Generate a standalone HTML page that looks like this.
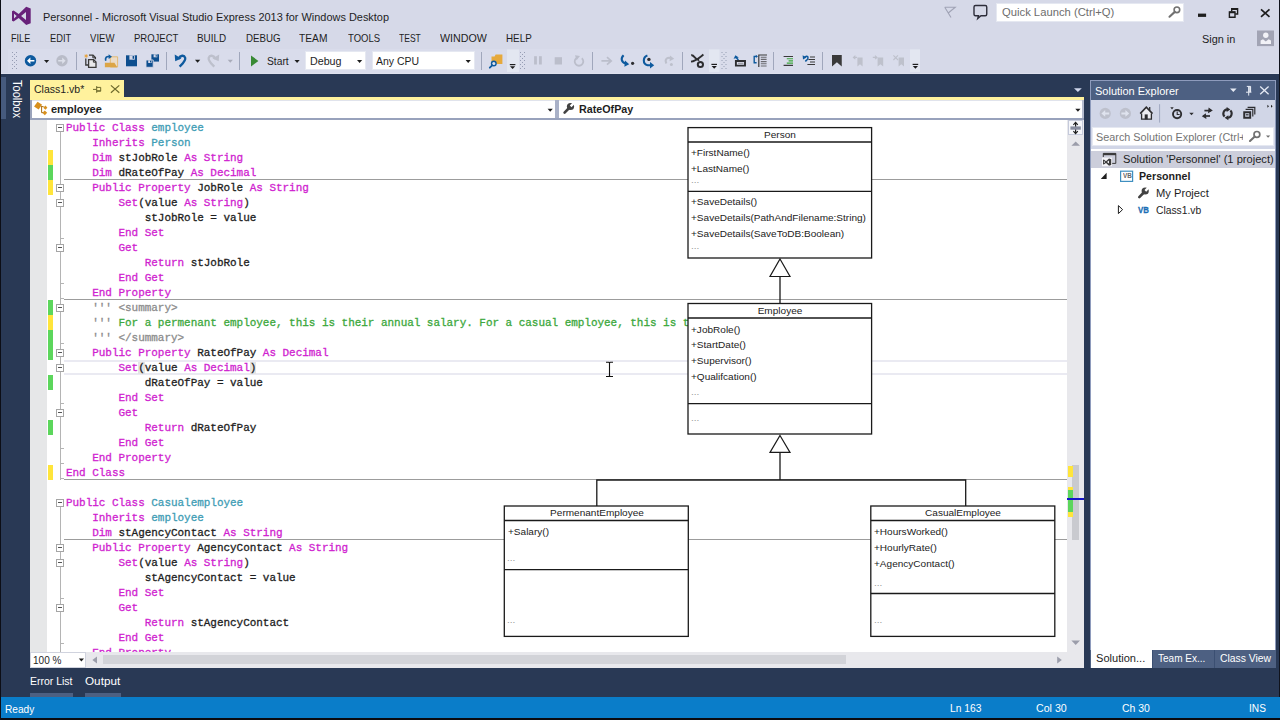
<!DOCTYPE html>
<html><head><meta charset="utf-8"><title>Personnel - Microsoft Visual Studio Express 2013 for Windows Desktop</title>
<style>
*{box-sizing:border-box;margin:0;padding:0}
html,body{width:1280px;height:720px;overflow:hidden}
body{background:#D6D9E8;font-family:"Liberation Sans",sans-serif;font-size:12px;color:#1e1e1e;position:relative}
.abs{position:absolute}
.t{position:absolute;white-space:nowrap;line-height:16px;height:16px;transform-origin:0 50%}
.u{position:absolute;white-space:nowrap;line-height:12px;height:12px;font-size:9.1px;color:#222;transform:scaleX(1.104);transform-origin:0 50%}
.code{position:absolute;left:66px;-webkit-text-stroke:0.3px;letter-spacing:-0.04px;font-family:"Liberation Mono",monospace;font-size:11px;line-height:15px;height:15px;white-space:pre;color:#1e1e1e}
.k{color:#D01FD0}.ty{color:#3F9DB5}.c{color:#3DA83D}.x{color:#8c8c8c}.br{background:#E4E4E4}
.sep{position:absolute;width:1.3px;background:#A0A7BC}
.combo{position:absolute;background:#fff;border:1px solid #E5E8F1}
.box{position:absolute;width:8.6px;height:8.6px;border:1px solid #A5A5A5;background:#fff}
.box:after{content:"";position:absolute;left:1px;top:2.8px;width:4.6px;height:1px;background:#555}
</style></head><body>

<div class="abs" id="navy" style="left:0;top:74px;width:1280px;height:624px;background:#293955"></div>
<div class="abs" style="left:1279px;top:0;width:1px;height:720px;background:#10131c"></div>
<div class="abs" style="left:0;top:0;width:1px;height:720px;background:#0c0e16;z-index:5"></div>
<div class="abs" style="left:1px;top:77px;width:5px;height:42px;background:#465A7D"></div>
<div class="abs" style="left:17px;top:99px;width:0;height:0"><div style="position:absolute;white-space:nowrap;font-size:12px;color:#fff;line-height:14px;transform:translate(-50%,-50%) rotate(90deg) scaleX(.92);">Toolbox</div></div>
<div class="abs" style="left:8px;top:48.5px;width:912px;height:24px;background:#D9DCEB"></div>
<div class="abs" style="left:1px;top:72.8px;width:1278px;height:1.2px;background:#DEE1EE"></div>
<div class="abs" style="left:996px;top:3px;width:188px;height:19px;background:#fff;border:1px solid #E5E8F1"></div>
<div class="combo" style="left:305px;top:51px;width:61px;height:19px"></div>
<div class="combo" style="left:372px;top:51px;width:103px;height:19px"></div>
<div class="sep" style="left:76px;top:52px;height:18px"></div>
<div class="sep" style="left:166px;top:52px;height:18px"></div>
<div class="sep" style="left:239px;top:52px;height:18px"></div>
<div class="sep" style="left:481px;top:52px;height:18px"></div>
<div class="sep" style="left:592px;top:52px;height:18px"></div>
<div class="sep" style="left:682px;top:52px;height:18px"></div>
<div class="sep" style="left:773px;top:52px;height:18px"></div>
<div class="sep" style="left:822px;top:52px;height:18px"></div>
<div class="abs" style="left:30px;top:80px;width:94px;height:18px;background:#FFF29D"></div>
<div class="abs" style="left:30px;top:97px;width:1054px;height:3px;background:#FFF29D"></div>
<div class="abs" id="editor" style="left:30px;top:100px;width:1054px;height:568px;background:#fff"></div>
<div class="abs" style="left:30px;top:100px;width:1054px;height:18px;background:#fff;border-top:1px solid #E0E3EC"></div>
<div class="abs" style="left:30px;top:117.5px;width:1054px;height:2px;background:#98A2BC"></div>
<div class="abs" style="left:555px;top:100px;width:4px;height:18px;background:#A9B1C7"></div>
<div class="abs" style="left:30px;top:100px;width:1.5px;height:18px;background:#9AA3BB"></div>
<div class="abs" style="left:1082.3px;top:100px;width:1.7px;height:18px;background:#B5BCCF"></div>
<div class="abs" style="left:30px;top:119.5px;width:17px;height:532.5px;background:#E6E7E8"></div>
<div class="abs" style="left:1067px;top:119.5px;width:17px;height:532.5px;background:#E8E8EC"></div>
<div class="abs" style="left:1068px;top:120px;width:15px;height:15px;background:#F5F6FA;border:1px solid #C5CADB"></div>
<div class="abs" style="left:1072px;top:465px;width:7px;height:75px;background:#C9CACF"></div>
<div class="abs" style="left:1067.5px;top:466px;width:5px;height:11px;background:#FFE53B"></div>
<div class="abs" style="left:1067.5px;top:487px;width:5px;height:30px;background:#FFE53B"></div>
<div class="abs" style="left:1067.5px;top:490px;width:5px;height:22px;background:#5CD65C"></div>
<div class="abs" style="left:1067px;top:498px;width:17px;height:2px;background:#1414C8"></div>
<div class="abs" style="left:30px;top:652px;width:1054px;height:16px;background:#E8E8EC"></div>
<div class="abs" style="left:30px;top:652px;width:56px;height:16px;background:#fff;border:1px solid #D0D3DE"></div>
<div class="abs" style="left:103px;top:655px;width:743px;height:9px;background:#D2D3D8"></div>
<div class="abs" style="left:64px;top:360px;width:1003px;height:15px;border-top:2px solid #EAEAF2;border-bottom:2px solid #EAEAF2"></div>
<div class="abs" style="left:64px;top:179px;width:1003px;height:1px;background:#9C9C9C"></div>
<div class="abs" style="left:64px;top:299px;width:1003px;height:1px;background:#9C9C9C"></div>
<div class="abs" style="left:64px;top:479px;width:1003px;height:1px;background:#9C9C9C"></div>
<div class="abs" style="left:64px;top:539px;width:1003px;height:1px;background:#9C9C9C"></div>
<div class="abs" style="left:60px;top:128px;width:1px;height:352px;background:#B4B4B4"></div>
<div class="abs" style="left:60px;top:503px;width:1px;height:149px;background:#B4B4B4"></div>
<div class="abs" style="left:60px;top:238px;width:4px;height:1px;background:#B4B4B4"></div>
<div class="abs" style="left:60px;top:283px;width:4px;height:1px;background:#B4B4B4"></div>
<div class="abs" style="left:60px;top:298px;width:4px;height:1px;background:#B4B4B4"></div>
<div class="abs" style="left:60px;top:343px;width:4px;height:1px;background:#B4B4B4"></div>
<div class="abs" style="left:60px;top:403px;width:4px;height:1px;background:#B4B4B4"></div>
<div class="abs" style="left:60px;top:448px;width:4px;height:1px;background:#B4B4B4"></div>
<div class="abs" style="left:60px;top:463px;width:4px;height:1px;background:#B4B4B4"></div>
<div class="abs" style="left:60px;top:478px;width:4px;height:1px;background:#B4B4B4"></div>
<div class="abs" style="left:60px;top:598px;width:4px;height:1px;background:#B4B4B4"></div>
<div class="abs" style="left:60px;top:643px;width:4px;height:1px;background:#B4B4B4"></div>
<div class="box" style="left:55.7px;top:123.7px"></div>
<div class="box" style="left:55.7px;top:183.7px"></div>
<div class="box" style="left:55.7px;top:198.7px"></div>
<div class="box" style="left:55.7px;top:243.7px"></div>
<div class="box" style="left:55.7px;top:303.7px"></div>
<div class="box" style="left:55.7px;top:348.7px"></div>
<div class="box" style="left:55.7px;top:363.7px"></div>
<div class="box" style="left:55.7px;top:408.7px"></div>
<div class="box" style="left:55.7px;top:498.7px"></div>
<div class="box" style="left:55.7px;top:543.7px"></div>
<div class="box" style="left:55.7px;top:558.7px"></div>
<div class="box" style="left:55.7px;top:603.7px"></div>
<div class="abs" style="left:48px;top:150px;width:5px;height:15px;background:#FFE53B"></div>
<div class="abs" style="left:48px;top:165px;width:5px;height:15px;background:#5CD65C"></div>
<div class="abs" style="left:48px;top:180px;width:5px;height:15px;background:#FFE53B"></div>
<div class="abs" style="left:48px;top:300px;width:5px;height:15px;background:#5CD65C"></div>
<div class="abs" style="left:48px;top:315px;width:5px;height:15px;background:#FFE53B"></div>
<div class="abs" style="left:48px;top:330px;width:5px;height:15px;background:#5CD65C"></div>
<div class="abs" style="left:48px;top:345px;width:5px;height:15px;background:#5CD65C"></div>
<div class="abs" style="left:48px;top:375px;width:5px;height:15px;background:#5CD65C"></div>
<div class="abs" style="left:48px;top:420px;width:5px;height:15px;background:#5CD65C"></div>
<div class="abs" style="left:48px;top:465px;width:5px;height:15px;background:#FFE53B"></div>
<div class="abs" id="codeclip" style="left:30px;top:119.5px;width:1037px;height:532.5px;overflow:hidden">
<div class="code" style="left:36px;top:1.5px"><span class="k">Public Class</span> <span class="ty">employee</span></div>
<div class="code" style="left:62.25px;top:16.5px"><span class="k">Inherits</span> <span class="ty">Person</span></div>
<div class="code" style="left:62.25px;top:31.5px"><span class="k">Dim</span> stJobRole <span class="k">As String</span></div>
<div class="code" style="left:62.25px;top:46.5px"><span class="k">Dim</span> dRateOfPay <span class="k">As Decimal</span></div>
<div class="code" style="left:62.25px;top:61.5px"><span class="k">Public Property</span> JobRole <span class="k">As String</span></div>
<div class="code" style="left:88.5px;top:76.5px"><span class="k">Set</span>(value <span class="k">As String</span>)</div>
<div class="code" style="left:114.75px;top:91.5px">stJobRole = value</div>
<div class="code" style="left:88.5px;top:106.5px"><span class="k">End Set</span></div>
<div class="code" style="left:88.5px;top:121.5px"><span class="k">Get</span></div>
<div class="code" style="left:114.75px;top:136.5px"><span class="k">Return</span> stJobRole</div>
<div class="code" style="left:88.5px;top:151.5px"><span class="k">End Get</span></div>
<div class="code" style="left:62.25px;top:166.5px"><span class="k">End Property</span></div>
<div class="code" style="left:62.25px;top:181.5px"><span class="x">&#x27;&#x27;&#x27; &lt;summary&gt;</span></div>
<div class="code" style="left:62.25px;top:196.5px"><span class="x">&#x27;&#x27;&#x27; </span><span class="c">For a permenant employee, this is their annual salary. For a casual employee, this is their hourly rate.</span></div>
<div class="code" style="left:62.25px;top:211.5px"><span class="x">&#x27;&#x27;&#x27; &lt;/summary&gt;</span></div>
<div class="code" style="left:62.25px;top:226.5px"><span class="k">Public Property</span> RateOfPay <span class="k">As Decimal</span></div>
<div class="code" style="left:88.5px;top:241.5px"><span class="k">Set</span><span class="br">(</span>value <span class="k">As Decimal</span><span class="br">)</span></div>
<div class="code" style="left:114.75px;top:256.5px">dRateOfPay = value</div>
<div class="code" style="left:88.5px;top:271.5px"><span class="k">End Set</span></div>
<div class="code" style="left:88.5px;top:286.5px"><span class="k">Get</span></div>
<div class="code" style="left:114.75px;top:301.5px"><span class="k">Return</span> dRateOfPay</div>
<div class="code" style="left:88.5px;top:316.5px"><span class="k">End Get</span></div>
<div class="code" style="left:62.25px;top:331.5px"><span class="k">End Property</span></div>
<div class="code" style="left:36px;top:346.5px"><span class="k">End Class</span></div>
<div class="code" style="left:36px;top:376.5px"><span class="k">Public Class</span> <span class="ty">Casualemployee</span></div>
<div class="code" style="left:62.25px;top:391.5px"><span class="k">Inherits</span> <span class="ty">employee</span></div>
<div class="code" style="left:62.25px;top:406.5px"><span class="k">Dim</span> stAgencyContact <span class="k">As String</span></div>
<div class="code" style="left:62.25px;top:421.5px"><span class="k">Public Property</span> AgencyContact <span class="k">As String</span></div>
<div class="code" style="left:88.5px;top:436.5px"><span class="k">Set</span>(value <span class="k">As String</span>)</div>
<div class="code" style="left:114.75px;top:451.5px">stAgencyContact = value</div>
<div class="code" style="left:88.5px;top:466.5px"><span class="k">End Set</span></div>
<div class="code" style="left:88.5px;top:481.5px"><span class="k">Get</span></div>
<div class="code" style="left:114.75px;top:496.5px"><span class="k">Return</span> stAgencyContact</div>
<div class="code" style="left:88.5px;top:511.5px"><span class="k">End Get</span></div>
<div class="code" style="left:62.25px;top:526.5px"><span class="k">End Property</span></div>
</div>
<div class="abs" style="left:1090px;top:80px;width:186px;height:588px;background:#8E9BBC"></div>
<div class="abs" style="left:1091px;top:81px;width:184px;height:19px;background:#4D6082"></div>
<div class="abs" style="left:1091px;top:100px;width:184px;height:49px;background:#D1D6E7"></div>
<div class="abs" style="left:1092px;top:127px;width:182px;height:19px;background:#fff;border:1px solid #E5E8F1"></div>
<div class="abs" style="left:1091px;top:149px;width:184px;height:501px;background:#fff"></div>
<div class="abs" style="left:1091px;top:150.5px;width:184px;height:17px;background:#CCCEDB"></div>
<div class="abs" style="left:1090px;top:650px;width:186px;height:18px;background:#4D6082"></div>
<div class="abs" style="left:1091px;top:650px;width:60.5px;height:18px;background:#fff"></div>
<div class="abs" style="left:1151.5px;top:650px;width:1px;height:18px;background:#3B4F72"></div>
<div class="abs" style="left:1214px;top:650px;width:1px;height:18px;background:#3B4F72"></div>
<div class="abs" style="left:1096px;top:127px;width:147px;height:19px;overflow:hidden"><div class="t" style="left:0;top:1.95px;font-size:11.7px;color:#747474;transform:scaleX(.927)">Search Solution Explorer (Ctrl+;)</div></div>
<div class="abs" style="left:30px;top:692.5px;width:43px;height:6px;background:#4D6082"></div>
<div class="abs" style="left:84.5px;top:692.5px;width:36px;height:6px;background:#4D6082"></div>
<div class="abs" id="status" style="left:0;top:697.2px;width:1280px;height:20.5px;background:#0A7DC9"></div>
<div class="abs" style="left:0;top:717.5px;width:1280px;height:3px;background:#0b0b10"></div>
<svg class="abs" style="left:0;top:0" width="1280" height="720" viewBox="0 0 1280 720">
<defs>
<g id="wr"><path d="M1.1 9.8L5.6 5.2" stroke="#424242" stroke-width="2.6" stroke-linecap="round" fill="none"/><circle cx="7" cy="3.7" r="3.6" fill="#424242"/></g>
<path id="dd" d="M0 0H5.2L2.6 3Z"/>
<g id="ovf"><rect x="0" y="0" width="5.6" height="1.2"/><path d="M0.2 2.2H5.4L2.8 5Z"/></g>
<g id="grip" fill="#969DB4"><path d="M0 0h1v1h-1zM4 0h1v1h-1zM2 2h1v1h-1zM0 4h1v1h-1zM4 4h1v1h-1zM2 6h1v1h-1zM0 8h1v1h-1zM4 8h1v1h-1zM2 10h1v1h-1zM0 12h1v1h-1zM4 12h1v1h-1zM2 14h1v1h-1zM0 16h1v1h-1zM4 16h1v1h-1z"/></g>
</defs>
<!-- VS logo -->
<path fill="#68217A" fill-rule="evenodd" d="M26.2 6.7L30.7 8.5V23.2L26.2 24.9L18.7 18L13.6 21.6L12 20.8V11.2L13.6 10.4L18.7 14ZM26 12L21.1 16L26 20ZM14 13.8L16.7 16L14 18.4Z"/>
<!-- title right -->
<path d="M944.75 7.25H955.25L948.25 13M944.75 7.25L951 17.5" stroke="#A0A3B5" fill="none" stroke-width="1.1"/>
<path d="M975.5 5.5H985.25Q986.75 5.5 986.75 7V14.25Q986.75 15.75 985.25 15.75H981L977.75 18.5L978.5 15.75H975.5Q974 15.75 974 14.25V7Q974 5.5 975.5 5.5Z" stroke="#2d2d3a" stroke-width="1.4" fill="none"/>
<circle cx="1176.9" cy="9.8" r="2.8" stroke="#717171" stroke-width="1.6" fill="none"/><path d="M1174.8 11.9L1169.5 16.7" stroke="#717171" stroke-width="2.1" stroke-linecap="round"/>
<rect x="1198" y="13.6" width="8.1" height="3.3" fill="#1e1e1e"/>
<g stroke="#1e1e1e" stroke-width="1.4" fill="none"><path d="M1231.7 11.5V8.8H1237.6V14H1235.2"/><path d="M1229.4 11.9H1235V17.2H1229.4Z"/><path d="M1229.4 12.3H1235M1231.7 9.2H1237.6" stroke-width="1.8"/></g>
<path d="M1261 9.4L1269.5 16.9M1269.5 9.4L1261 16.9" stroke="#1e1e1e" stroke-width="1.7"/>
<rect x="1257" y="30.5" width="17" height="15.6" fill="#A2A4B4"/><circle cx="1265.8" cy="35.3" r="2.7" fill="#F2F2F7"/><path d="M1260.6 44V40.4L1263 39.3L1265.8 41.5L1268.6 39.3L1271 40.4V44Z" fill="#F2F2F7"/>
<!-- toolbar 1 -->
<use href="#grip" x="12" y="52"/>
<circle cx="30.5" cy="60.8" r="5.7" fill="#0E5A9E"/><path d="M27 60.8L30.4 57.6V60H34.4V61.6H30.4V64Z" fill="#fff"/>
<use href="#dd" x="44" y="60" fill="#1e1e1e"/>
<circle cx="62" cy="60.8" r="5.7" fill="#B9BCC8"/><path d="M65.6 60.8L62.2 57.6V60H58.2V61.6H62.2V64Z" fill="#DDE0EA"/>
<!-- new project -->
<g stroke="#3a3a3a" stroke-width="1.3" fill="none"><path d="M85.8 58.5V65H88M89 55.2H93L95.4 57.6V59.2"/><path d="M92.8 55.2V57.8H95.4" stroke-width="1"/><path d="M88.6 59.6H93.6L96 62V67.4H88.6Z" fill="#E9E9EC"/><path d="M93.4 59.8V62.2H96" stroke-width="1"/></g>
<path d="M86.2 54.2V57.8M84.4 56H88M85 54.8L87.4 57.2M87.4 54.8L85 57.2" stroke="#E6A23A" stroke-width="0.9"/>
<!-- open -->
<path d="M110.3 56.8H117.6V67H110.3Z" fill="#EBDCC8" stroke="#E2B25C" stroke-width="0.8"/>
<path d="M104.9 62.8H114.4L117.2 67.3H104.9Z" fill="#DCA546"/>
<path d="M105.8 60.8C104.8 58 106.6 56 109.4 56.6" stroke="#0E5A9E" stroke-width="1.7" fill="none"/><path d="M108.6 54.2L112 56.8L108.6 59Z" fill="#0E5A9E"/>
<!-- save -->
<path d="M126 55.3H137V66.3H126Z" fill="#0E4F8F"/><rect x="129.4" y="55.3" width="5.4" height="4.4" fill="#D6D9E8"/><rect x="132.6" y="56" width="1.4" height="2.8" fill="#0E4F8F"/>
<!-- save all -->
<path d="M151.4 54.3H159V61.6H151.4Z" fill="#0E4F8F"/><rect x="153.6" y="54.3" width="3.7" height="3" fill="#D6D9E8"/><rect x="155.7" y="54.8" width="1" height="1.9" fill="#0E4F8F"/>
<path d="M146 60H153.2V67.3H146Z" fill="#0E4F8F" stroke="#D6D9E8" stroke-width="0.9"/><rect x="148.2" y="60.3" width="3.4" height="2.7" fill="#D6D9E8"/><rect x="150" y="60.7" width="1" height="1.8" fill="#0E4F8F"/>
<!-- undo / redo -->
<g id="undo"><path d="M178.3 58.8C180.5 55 184.2 54.8 185.2 57.8C186 60.8 183 63.2 179.6 66.6" stroke="#0E5A9E" stroke-width="2.3" fill="none"/><path d="M174.7 54.4L175.2 61.2L181.4 58.6Z" fill="#0E5A9E"/></g>
<use href="#dd" x="195" y="59.8" fill="#1e1e1e"/>
<g transform="translate(393.9,0) scale(-1,1)"><path d="M178.3 58.8C180.5 55 184.2 54.8 185.2 57.8C186 60.8 183 63.2 179.6 66.6" stroke="#BDC0CC" stroke-width="2.3" fill="none"/><path d="M174.7 54.4L175.2 61.2L181.4 58.6Z" fill="#BDC0CC"/></g>
<use href="#dd" x="227.7" y="59.8" fill="#A9ACBA"/>
<!-- start -->
<path d="M251 55.4L258.4 60.9L251 66.4Z" fill="#388A34"/>
<use href="#dd" x="294.5" y="60.1" fill="#1e1e1e"/>
<use href="#dd" x="357" y="60.1" fill="#1e1e1e"/>
<use href="#dd" x="465.6" y="60.1" fill="#1e1e1e"/>
<!-- find in files -->
<path d="M491.5 56.4H494.6L495.6 54.6H502.4V63.9H491.5Z" fill="#E6A93C"/>
<circle cx="493.8" cy="63.5" r="2.3" fill="#DCE3F0" stroke="#0E5A9E" stroke-width="1.4"/><path d="M492.2 65.3L489.8 67.7" stroke="#0E5A9E" stroke-width="1.8" stroke-linecap="round"/>
<rect x="507" y="49.5" width="12" height="22.5" fill="#E3E7F1"/><use href="#ovf" x="509.8" y="64" fill="#1e1e1e"/>
<use href="#grip" x="520" y="52"/>
<g fill="#BBBECB"><rect x="534.1" y="56.2" width="2.8" height="8.3"/><rect x="539" y="56.2" width="2.8" height="8.3"/><rect x="554.7" y="57.2" width="7.3" height="7.3"/></g>
<path d="M576.2 58.2A4.3 4.3 0 1 0 581.8 58.2" stroke="#BBBECB" stroke-width="1.8" fill="none"/><path d="M575 55.2L580 56L576.6 60.2Z" fill="#BBBECB"/>
<path d="M601.4 60.9H610.4M607 57.2L611.2 60.9L607 64.6" stroke="#BBBECB" stroke-width="1.7" fill="none"/>
<!-- step icons -->
<path d="M623.6 55.2C620.6 58 621 62.6 626 63.6" stroke="#0E5A9E" stroke-width="2.1" fill="none"/><path d="M625 60.4L629.2 64.2L624.4 66.8Z" fill="#0E5A9E"/><circle cx="632.6" cy="63.3" r="1.6" fill="#2d2d30"/>
<path d="M647.4 55.4C642.6 57 642.6 64.2 647.6 65.2H651" stroke="#0E5A9E" stroke-width="2.1" fill="none"/><path d="M650 62L654.2 65.2L650 68.4Z" fill="#0E5A9E"/><circle cx="648.9" cy="59.4" r="1.7" fill="#2d2d30"/>
<path d="M666.4 63.4C664 59 668 56.6 671.4 58.4" stroke="#BDC0CC" stroke-width="2" fill="none"/><path d="M670 55.4L674.2 58.8L669.6 61.2Z" fill="#BDC0CC"/><circle cx="671.4" cy="64.6" r="1.5" fill="#BDC0CC"/>
<!-- breakpoints icon -->
<g stroke="#2d2d30" fill="none"><path d="M691.2 55.4C694.2 54.4 695.4 60.8 699.2 60" stroke-width="1.9"/><path d="M691 61.6C695.6 61.4 699 58 703.4 54.6" stroke-width="1.9"/><circle cx="700.4" cy="64.5" r="2.6" stroke-width="2"/></g>
<rect x="709" y="49.5" width="10.5" height="22.5" fill="#E3E7F1"/><use href="#ovf" x="711.4" y="63.8" fill="#1e1e1e"/>
<use href="#grip" x="721.5" y="52"/>
<!-- text editor icons -->
<path d="M733.6 58.8L735.4 55.2L738.8 57.6Z" fill="#0E5A9E"/><path d="M736 57.2L738.4 60" stroke="#0E5A9E" stroke-width="1.5"/>
<path d="M735.9 61H745V65.6H735.9Z" stroke="#2d2d30" stroke-width="1.9" fill="none"/><path d="M738 63.3H743.4" stroke="#8a8a90" stroke-width="0.9"/>
<path d="M756.6 56.4H754.2V62.8H756.6" stroke="#0E5A9E" stroke-width="1.4" fill="none"/><path d="M755.8 54.8L758 56.4L755.8 58Z" fill="#0E5A9E"/>
<path d="M758.8 54.6V67M758.8 55H767" stroke="#3a3a3a" stroke-width="1.2" fill="none"/><path d="M760.8 57.2H766.6M760.8 59.4H766.6M760.8 61.6H766.6M760.8 63.8H766.6M760.8 66H766.6" stroke="#6a6a70" stroke-width="1.1"/>
<path d="M783.6 56.5H793M783.6 65.4H793" stroke="#3a3a3a" stroke-width="1.1"/><path d="M786.8 58.7H793M788.6 60.9H793M786.8 63.1H793" stroke="#3DA83D" stroke-width="1.1"/>
<path d="M804.4 57.4C806 55.4 808.2 56 808 58C807.8 59.6 806.4 60.2 805.4 61.4" stroke="#0E5A9E" stroke-width="1.5" fill="none"/><path d="M802.6 55.2L803 59.4L806.6 57.4Z" fill="#0E5A9E"/>
<path d="M810 57H815M808.4 59.5H815M810 62H815M807.4 64.5H815" stroke="#3a3a3a" stroke-width="1.1"/>
<path d="M832 54.9H841.75V66.5L836.9 62.3L832 66.5Z" fill="#3a3a3a"/>
<g fill="#BEC1CC" stroke="#BEC1CC"><path d="M857.4 57.6H862.6V66.4L860 64.2L857.4 66.4Z" stroke="none"/><path d="M853.4 57.4H857M855.4 55.6L853.4 57.4L855.4 59.2" fill="none" stroke-width="1.1"/>
<path d="M877.6 57.6H883.2V66.4L880.4 64.2L877.6 66.4Z" stroke="none"/><path d="M872.8 57.4H877M875 55.6L877 57.4L875 59.2" fill="none" stroke-width="1.1"/>
<path d="M898.6 57.6H904V66.4L901.3 64.2L898.6 66.4Z" stroke="none"/><path d="M893.4 55.4L898 60M898 55.4L893.4 60" fill="none" stroke-width="1.1"/></g>
<rect x="910" y="49.5" width="10" height="22.5" fill="#E3E7F1"/><use href="#ovf" x="912.6" y="63.8" fill="#1e1e1e"/>
<!-- doc tab -->
<path d="M93 89.4H96.6M96.7 86.1V92.8M96.6 87.4H100.7V91.2H96.6M96.6 90.8H100.7" stroke="#6E6A2C" stroke-width="1" fill="none"/>
<path d="M110.9 85.4L119.3 92.7M119.3 85.4L110.9 92.7" stroke="#6E6A2C" stroke-width="1.2"/>
<path d="M1074 88.2H1081.8L1077.9 92Z" fill="#D0D8EC"/>
<!-- nav bar -->
<g fill="#D8901E"><path d="M38.1 101.8L42.2 105.4L38.1 109.6L34 106Z" transform="rotate(-8 38 105.8)"/><path d="M45.4 105.6L47.4 107.7L45.4 109.8L43.3 107.7Z"/><path d="M44.8 110.4L47.2 112.8L44.8 115.2L42.4 112.8Z"/></g>
<path d="M41 106.6H43.6M41.6 106.8V112.7H43" stroke="#A86E14" stroke-width="1" fill="none"/>
<use href="#dd" x="547.6" y="108.8" fill="#1e1e1e" transform="translate(0,0)"/>
<use href="#dd" x="1075.3" y="108.8" fill="#1e1e1e"/>
<use href="#wr" x="563.5" y="102.8"/><path d="M569.8 105.5L573.2 102.1L574.9 103.8L571.5 107.2Z" fill="#fff"/>
<!-- editor bits -->
<path d="M1075.6 122.6V133.4M1073.4 124.8L1075.6 122.4L1077.8 124.8M1073.4 131.2L1075.6 133.6L1077.8 131.2" stroke="#1e1e1e" stroke-width="1.2" fill="none"/><rect x="1070.4" y="126.4" width="10.4" height="3.3" fill="#868B9E"/>
<path d="M1071.4 145.8H1080L1075.7 141.4Z" fill="#9B9DAA"/>
<path d="M1071.4 640.6H1080L1075.7 645Z" fill="#9B9DAA"/>
<path d="M97 656.4V663.6L92.4 660Z" fill="#9B9DAA"/>
<path d="M1057.2 656.4V663.6L1061.8 660Z" fill="#9B9DAA"/>
<use href="#dd" x="78.8" y="658.6" fill="#1e1e1e"/>
<path d="M609.5 362.3V376.5M606 362.3H608.6Q609.5 362.3 609.5 363.2Q609.5 362.3 610.4 362.3H613M606 376.5H608.6Q609.5 376.5 609.5 375.6Q609.5 376.5 610.4 376.5H613" stroke="#111" stroke-width="1.1" fill="none"/>
<!-- solution explorer title -->
<path d="M1230 88.6H1236.6L1233.3 92Z" fill="#E6EAF4"/>
<path d="M1248.6 86.2V92.2M1246 92.2H1251.4M1248.7 92.2V95.6M1246.8 86.4H1250.6V92" stroke="#E6EAF4" stroke-width="1" fill="none"/><path d="M1250 86.4V92" stroke="#E6EAF4" stroke-width="1.6"/>
<path d="M1260.2 86.4L1268.6 94.2M1268.6 86.4L1260.2 94.2" stroke="#E6EAF4" stroke-width="1.3"/>
<!-- SE toolbar -->
<circle cx="1105.2" cy="113.4" r="5.6" fill="#BDC0CC"/><path d="M1101.4 113.4L1105.2 110V112.4H1109.2V114.4H1105.2V116.8Z" fill="#DFE3EE"/>
<circle cx="1125.4" cy="113.4" r="5.6" fill="#BDC0CC"/><path d="M1129.2 113.4L1125.4 110V112.4H1121.4V114.4H1125.4V116.8Z" fill="#DFE3EE"/>
<path d="M1141.6 113V119.2H1151.4V113" fill="#ECECF0" stroke="#2d2d30" stroke-width="1.3"/><path d="M1140.2 113.6L1146.3 107.2L1152.5 113.6" stroke="#2d2d30" stroke-width="1.6" fill="#ECECF0"/><path d="M1149.7 107V110.4" stroke="#2d2d30" stroke-width="1.3"/><rect x="1144.7" y="114.4" width="3" height="5" fill="#2d2d30"/>
<rect x="1159" y="104.2" width="1.1" height="18.4" fill="#A4ACC4"/>
<circle cx="1177.1" cy="114.1" r="4.1" stroke="#2d2d30" stroke-width="1.9" fill="none"/><path d="M1177.2 111.6V114.5H1179.6" stroke="#2d2d30" stroke-width="1.1" fill="none"/><path d="M1170.3 107.2H1173.7L1172 109.6Z" fill="#2d2d30"/>
<path d="M1189.3 112.8H1193.7L1191.5 115.2Z" fill="#2d2d30"/>
<g stroke="#2d2d30" stroke-width="1.7" fill="none"><path d="M1204.4 110.6H1211"/><path d="M1203.4 116H1210"/></g><path d="M1208.6 107.4L1212.8 110.4L1208 113.2Z" fill="#2d2d30"/><path d="M1205.8 113.2L1201.8 116.2L1206.4 119Z" fill="#2d2d30"/>
<g stroke="#2d2d30" stroke-width="2.1" fill="none"><path d="M1224.6 116.6A4.2 4.2 0 0 1 1227.4 109.4"/><path d="M1230.4 110.6A4.2 4.2 0 0 1 1227.6 117.8"/></g><path d="M1226.6 107L1230.4 109.4L1226.6 112Z" fill="#2d2d30"/><path d="M1228.4 115.2L1224.6 117.8L1228.4 120.2Z" fill="#2d2d30"/>
<path d="M1247.6 107.4H1254.8V114.6M1245.6 109.4H1252.8V116.6" stroke="#2d2d30" stroke-width="1.2" fill="none"/><path d="M1244.2 112.2H1250.2V117.8H1244.2Z" stroke="#2d2d30" stroke-width="1.9" fill="#D1D6E7"/><path d="M1245.8 114.8H1248.6" stroke="#2d2d30" stroke-width="1.2"/>
<path d="M1267.4 104.8L1269 106.3L1267.4 107.8ZM1271 104.8L1272.6 106.3L1271 107.8Z" fill="#1e1e1e"/>
<circle cx="1256.9" cy="134.4" r="2.9" stroke="#717171" stroke-width="1.7" fill="none"/><path d="M1254.8 136.6L1250 141" stroke="#717171" stroke-width="2.1" stroke-linecap="round"/>
<path d="M1266 135.4H1270.2L1268.1 137.7Z" fill="#717171"/>
<!-- tree icons -->
<path d="M1103.3 157V153.4H1115.8V163.4H1112.2" stroke="#3a3a3a" stroke-width="1" fill="none"/><path d="M1103.2 154.2H1116" stroke="#3a3a3a" stroke-width="2"/>
<rect x="1102" y="157.6" width="10" height="8.6" fill="#F4F4F8"/>
<path fill="#3a3a3a" fill-rule="evenodd" d="M1109 158.4L1111.2 159.3V164.9L1109 165.8L1106 162.9L1103.8 164.6L1103 164.2V160L1103.8 159.6L1106 161.3ZM1109 160.6L1107 162.1L1109 163.6ZM1103.9 161L1105.2 162.1L1103.9 163.2Z"/>
<path d="M1106.6 172.8V178.9H1100.8Z" fill="#1e1e1e"/>
<rect x="1120.6" y="171.2" width="12" height="10.2" fill="#fff" stroke="#3F8FC0" stroke-width="1.2"/>
<use href="#wr" x="1138.2" y="187.3"/><path d="M1144.5 190L1147.9 186.6L1149.6 188.3L1146.2 191.7Z" fill="#fff"/>
<path d="M1118.4 205.6V213.6L1122.6 209.6Z" stroke="#1e1e1e" stroke-width="1" fill="#fff"/>
</svg>

<div class="t" style="left:42.5px;top:8.54595px;font-size:11.7px;font-weight:normal;color:#1e1e1e;transform:scaleX(0.9350);">Personnel - Microsoft Visual Studio Express 2013 for Windows Desktop</div>
<div class="t" style="left:10.9px;top:30.2192px;font-size:11.2px;font-weight:normal;color:#1e1e1e;transform:scaleX(0.8169);">FILE</div>
<div class="t" style="left:49.9px;top:30.2192px;font-size:11.2px;font-weight:normal;color:#1e1e1e;transform:scaleX(0.8319);">EDIT</div>
<div class="t" style="left:90.1px;top:30.2192px;font-size:11.2px;font-weight:normal;color:#1e1e1e;transform:scaleX(0.8569);">VIEW</div>
<div class="t" style="left:133.9px;top:30.2192px;font-size:11.2px;font-weight:normal;color:#1e1e1e;transform:scaleX(0.8504);">PROJECT</div>
<div class="t" style="left:196.9px;top:30.2192px;font-size:11.2px;font-weight:normal;color:#1e1e1e;transform:scaleX(0.8831);">BUILD</div>
<div class="t" style="left:245.5px;top:30.2192px;font-size:11.2px;font-weight:normal;color:#1e1e1e;transform:scaleX(0.8672);">DEBUG</div>
<div class="t" style="left:299.2px;top:30.2192px;font-size:11.2px;font-weight:normal;color:#1e1e1e;transform:scaleX(0.9139);">TEAM</div>
<div class="t" style="left:347.5px;top:30.2192px;font-size:11.2px;font-weight:normal;color:#1e1e1e;transform:scaleX(0.8510);">TOOLS</div>
<div class="t" style="left:398.8px;top:30.2192px;font-size:11.2px;font-weight:normal;color:#1e1e1e;transform:scaleX(0.7625);">TEST</div>
<div class="t" style="left:439.8px;top:30.2192px;font-size:11.2px;font-weight:normal;color:#1e1e1e;transform:scaleX(0.9554);">WINDOW</div>
<div class="t" style="left:506.2px;top:30.2192px;font-size:11.2px;font-weight:normal;color:#1e1e1e;transform:scaleX(0.8794);">HELP</div>
<div class="t" style="left:1001.6px;top:4.34595px;font-size:11.7px;font-weight:normal;color:#6d6d6d;transform:scaleX(0.9623);">Quick Launch (Ctrl+Q)</div>
<div class="t" style="left:1201.7px;top:30.646px;font-size:11.7px;font-weight:normal;color:#1e1e1e;transform:scaleX(0.9318);">Sign in</div>
<div class="t" style="left:266.6px;top:52.7459px;font-size:11.7px;font-weight:normal;color:#1e1e1e;transform:scaleX(0.8792);">Start</div>
<div class="t" style="left:309.8px;top:52.7459px;font-size:11.7px;font-weight:normal;color:#1e1e1e;transform:scaleX(0.9146);">Debug</div>
<div class="t" style="left:375.8px;top:52.7459px;font-size:11.7px;font-weight:normal;color:#1e1e1e;transform:scaleX(0.8967);">Any CPU</div>
<div class="t" style="left:33.75px;top:81.2459px;font-size:11.7px;font-weight:normal;color:#1e1e1e;transform:scaleX(0.8995);">Class1.vb*</div>
<div class="t" style="left:50.8px;top:101.446px;font-size:11.7px;font-weight:bold;color:#1e1e1e;transform:scaleX(0.9422);">employee</div>
<div class="t" style="left:578.75px;top:101.446px;font-size:11.7px;font-weight:bold;color:#1e1e1e;transform:scaleX(0.9178);">RateOfPay</div>
<div class="t" style="left:1095.2px;top:82.5459px;font-size:11.7px;font-weight:normal;color:#ffffff;transform:scaleX(0.9404);">Solution Explorer</div>
<div class="t" style="left:1122.5px;top:150.846px;font-size:11.7px;font-weight:normal;color:#1e1e1e;transform:scaleX(0.9512);">Solution &#x27;Personnel&#x27; (1 project)</div>
<div class="t" style="left:1139px;top:167.746px;font-size:11.7px;font-weight:bold;color:#1e1e1e;transform:scaleX(0.9096);">Personnel</div>
<div class="t" style="left:1156px;top:184.546px;font-size:11.7px;font-weight:normal;color:#1e1e1e;transform:scaleX(0.9556);">My Project</div>
<div class="t" style="left:1156px;top:201.546px;font-size:11.7px;font-weight:normal;color:#1e1e1e;transform:scaleX(0.8818);">Class1.vb</div>
<div class="t" style="left:1138.3px;top:201.712px;font-size:9.2px;font-weight:bold;color:#1B6EB5;transform:scaleX(0.8540);-webkit-text-stroke:0.3px">VB</div>
<div class="t" style="left:1122.7px;top:168.482px;font-size:6.4px;font-weight:bold;color:#666;transform:scaleX(0.9913);">VB</div>
<div class="t" style="left:1096px;top:649.946px;font-size:11.7px;font-weight:normal;color:#1e1e1e;transform:scaleX(0.9466);">Solution...</div>
<div class="t" style="left:1157.5px;top:649.946px;font-size:11.7px;font-weight:normal;color:#ffffff;transform:scaleX(0.8568);">Team Ex...</div>
<div class="t" style="left:1219.9px;top:649.946px;font-size:11.7px;font-weight:normal;color:#ffffff;transform:scaleX(0.8873);">Class View</div>
<div class="t" style="left:33.3px;top:651.746px;font-size:11.7px;font-weight:normal;color:#1e1e1e;transform:scaleX(0.8570);">100 %</div>
<div class="t" style="left:30.2px;top:673.246px;font-size:11.7px;font-weight:normal;color:#ffffff;transform:scaleX(0.8965);">Error List</div>
<div class="t" style="left:84.8px;top:673.246px;font-size:11.7px;font-weight:normal;color:#ffffff;transform:scaleX(1.0033);">Output</div>
<div class="t" style="left:4.7px;top:700.546px;font-size:11.7px;font-weight:normal;color:#ffffff;transform:scaleX(0.8673);">Ready</div>
<div class="t" style="left:949.7px;top:700.446px;font-size:11.7px;font-weight:normal;color:#ffffff;transform:scaleX(0.8784);">Ln 163</div>
<div class="t" style="left:1036px;top:700.446px;font-size:11.7px;font-weight:normal;color:#ffffff;transform:scaleX(0.9087);">Col 30</div>
<div class="t" style="left:1122.2px;top:700.446px;font-size:11.7px;font-weight:normal;color:#ffffff;transform:scaleX(0.8946);">Ch 30</div>
<div class="t" style="left:1249.4px;top:700.446px;font-size:11.7px;font-weight:normal;color:#ffffff;transform:scaleX(0.8674);">INS</div>
<svg class="abs" style="left:0;top:0" width="1280" height="720" viewBox="0 0 1280 720">
<g fill="#fff" stroke="#1a1a1a" stroke-width="1.3">
<rect x="688" y="127.6" width="183.6" height="130.4"/>
<rect x="688" y="303.5" width="183.6" height="130.5"/>
<rect x="504.3" y="506" width="184" height="130.4"/>
<rect x="870.8" y="506" width="184" height="130.4"/>
</g>
<g stroke="#1a1a1a" stroke-width="1.3" fill="none">
<path d="M688 142H871.6M688 191.4H871.6"/>
<path d="M688 318H871.6M688 403.7H871.6"/>
<path d="M504.3 520.5H688.3M504.3 569.6H688.3"/>
<path d="M870.8 520.5H1054.8M870.8 593.5H1054.8"/>
<path d="M780 276.5V303.5M780 452.4V480M596.8 506V480H965.7V506"/>
</g>
<g fill="#fff" stroke="#1a1a1a" stroke-width="1.2">
<path d="M780 259L790 276.5H770Z"/>
<path d="M780 435.5L790 452.4H770Z"/>
</g>
</svg>

<div class="u" style="left:780px;top:128.75px;width:0;color:#222"><span style="position:absolute;left:0;transform:translateX(-50%)">Person</span></div>
<div class="u" style="left:691px;top:147.05px;color:#222">+FirstName()</div>
<div class="u" style="left:691px;top:163.05px;color:#222">+LastName()</div>
<div class="u" style="left:691.3px;top:174.05px;color:#9a9a9a">...</div>
<div class="u" style="left:691px;top:196.45px;color:#222">+SaveDetails()</div>
<div class="u" style="left:691px;top:212.45px;color:#222">+SaveDetails(PathAndFilename:String)</div>
<div class="u" style="left:691px;top:228.45px;color:#222">+SaveDetails(SaveToDB:Boolean)</div>
<div class="u" style="left:691.3px;top:239.55px;color:#9a9a9a">...</div>
<div class="u" style="left:780px;top:305.45px;width:0;color:#222"><span style="position:absolute;left:0;transform:translateX(-50%)">Employee</span></div>
<div class="u" style="left:691px;top:323.85px;color:#222">+JobRole()</div>
<div class="u" style="left:691px;top:339.25px;color:#222">+StartDate()</div>
<div class="u" style="left:691px;top:354.95px;color:#222">+Supervisor()</div>
<div class="u" style="left:691px;top:370.95px;color:#222">+Qualifcation()</div>
<div class="u" style="left:691.3px;top:385.55px;color:#9a9a9a">...</div>
<div class="u" style="left:691.3px;top:411.55px;color:#9a9a9a">...</div>
<div class="u" style="left:596.5px;top:507.45px;width:0;color:#222"><span style="position:absolute;left:0;transform:translateX(-50%)">PermenantEmployee</span></div>
<div class="u" style="left:507.5px;top:525.95px;color:#222">+Salary()</div>
<div class="u" style="left:507.3px;top:552.05px;color:#9a9a9a">...</div>
<div class="u" style="left:507.3px;top:613.55px;color:#9a9a9a">...</div>
<div class="u" style="left:963px;top:507.45px;width:0;color:#222"><span style="position:absolute;left:0;transform:translateX(-50%)">CasualEmployee</span></div>
<div class="u" style="left:874px;top:525.95px;color:#222">+HoursWorked()</div>
<div class="u" style="left:874px;top:542.15px;color:#222">+HourlyRate()</div>
<div class="u" style="left:874px;top:558.45px;color:#222">+AgencyContact()</div>
<div class="u" style="left:874.3px;top:576.55px;color:#9a9a9a">...</div>
<div class="u" style="left:874.3px;top:613.55px;color:#9a9a9a">...</div>
</body></html>
